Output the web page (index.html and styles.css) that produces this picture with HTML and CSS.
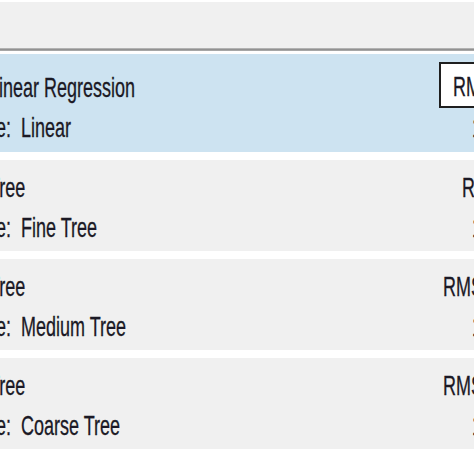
FILE: index.html
```html
<!DOCTYPE html>
<html>
<head>
<meta charset="utf-8">
<link rel="stylesheet" href="styles.css">
</head>
<body>
<div class="app">
  <div class="toolbar"></div>
  <div class="sep"></div>
  <div class="list">
    <div class="row row-first selected">
      <div class="left">
        <div class="line name"><span class="t">Linear Regression</span></div>
        <div class="line"><span class="t label">Last change:</span><span class="t">Linear</span></div>
      </div>
      <div class="right">
        <div class="metric-box"><span class="t tb">RMSE: 4.1279</span></div>
        <div class="line feat"><span class="t">13/13 features</span></div>
      </div>
    </div>
    <div class="row">
      <div class="left">
        <div class="line name"><span class="t">Tree</span></div>
        <div class="line"><span class="t label">Last change:</span><span class="t">Fine Tree</span></div>
      </div>
      <div class="right">
        <div class="line r-short"><span class="t">RMSE: 4.86</span></div>
        <div class="line feat"><span class="t">13/13 features</span></div>
      </div>
    </div>
    <div class="row">
      <div class="left">
        <div class="line name"><span class="t">Tree</span></div>
        <div class="line"><span class="t label">Last change:</span><span class="t">Medium Tree</span></div>
      </div>
      <div class="right">
        <div class="line r-long"><span class="t">RMSE: 4.6307</span></div>
        <div class="line feat"><span class="t">13/13 features</span></div>
      </div>
    </div>
    <div class="row">
      <div class="left">
        <div class="line name"><span class="t">Tree</span></div>
        <div class="line"><span class="t label">Last change:</span><span class="t">Coarse Tree</span></div>
      </div>
      <div class="right">
        <div class="line r-long"><span class="t">RMSE: 5.0931</span></div>
        <div class="line feat"><span class="t">13/13 features</span></div>
      </div>
    </div>
  </div>
</div>
</body>
</html>
```

FILE: styles.css
```css
html, body {
  margin: 0;
  padding: 0;
  background: #ffffff;
}

.app {
  width: 474px;
  height: 474px;
  overflow: hidden;
  background: #ffffff;
  font-family: "Liberation Sans", Arial, sans-serif;
  font-size: 18px;
  color: #1b1925;
}

.toolbar {
  margin-top: 2px;
  height: 46px;
  background: #f0f0f0;
}

.sep {
  height: 3px;
  background: linear-gradient(#c2c2c2, #929292 50%, #b0b0b0);
}

.list {
  padding-top: 3px;
  display: flex;
  flex-direction: column;
  gap: 8px;
}

.row {
  height: 91px;
  box-sizing: border-box;
  padding-top: 11px;
  background: #f0f0f0;
  display: flex;
  overflow: hidden;
}

.row-first {
  height: 98px;
  padding-top: 17px;
}

.selected {
  background: #cde3f1;
}

.left {
  flex: 0 0 439px;
  width: 439px;
}

.right {
  flex: 0 0 220px;
  width: 220px;
}

.line {
  height: 40px;
  line-height: 40px;
  white-space: nowrap;
}

.t {
  display: inline-block;
  transform: scaleY(1.55);
  transform-origin: 0 26px;
  -webkit-text-stroke: 0.2px #1b1925;
}

.name {
  margin-left: -11px;
}

.left .line + .line {
  margin-left: -92px;
}

.label {
  margin-right: 10px;
}

.metric-box {
  height: 46px;
  box-sizing: border-box;
  margin-top: -9px;
  margin-bottom: 3px;
  border: 2px solid #1f1f1f;
  border-right: none;
  background: #ffffff;
  padding: 10px 0 0 12px;
  line-height: 32px;
  white-space: nowrap;
}

.tb {
  transform-origin: 0 22px;
}

.r-short {
  padding-left: 23px;
}

.r-long {
  padding-left: 4px;
}

.feat {
  padding-left: 33px;
}
```
